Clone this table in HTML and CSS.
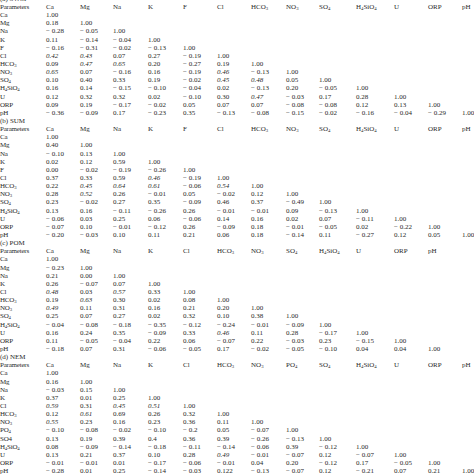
FILE: index.html
```html
<!DOCTYPE html>
<html>
<head>
<meta charset="utf-8">
<link rel="stylesheet" href="styles.css">
</head>
<body>
<table class="corr">
<tbody>
<tr class="title"><td colspan="14">(a) SWM</td></tr>
<tr><th>Parameters</th><th>Ca</th><th>Mg</th><th>Na</th><th>K</th><th>F</th><th>Cl</th><th>HCO<sub>3</sub></th><th>NO<sub>3</sub></th><th>SO<sub>4</sub></th><th>H<sub>4</sub>SiO<sub>4</sub></th><th>U</th><th>ORP</th><th>pH</th></tr>
<tr><th>Ca</th><td>1.00</td></tr>
<tr><th>Mg</th><td>0.18</td><td>1.00</td></tr>
<tr><th>Na</th><td>− 0.28</td><td>− 0.05</td><td>1.00</td></tr>
<tr><th>K</th><td>0.11</td><td>− 0.14</td><td>− 0.04</td><td>1.00</td></tr>
<tr><th>F</th><td>− 0.16</td><td>− 0.31</td><td>− 0.02</td><td>− 0.13</td><td>1.00</td></tr>
<tr><th>Cl</th><td class="sig">0.42</td><td class="sig">0.43</td><td>0.07</td><td>0.27</td><td>− 0.19</td><td>1.00</td></tr>
<tr><th>HCO<sub>3</sub></th><td>0.09</td><td class="sig">0.47</td><td class="sig">0.65</td><td>0.20</td><td>− 0.27</td><td>0.19</td><td>1.00</td></tr>
<tr><th>NO<sub>3</sub></th><td class="sig">0.65</td><td>0.07</td><td>− 0.16</td><td>0.16</td><td>− 0.19</td><td class="sig">0.46</td><td>− 0.13</td><td>1.00</td></tr>
<tr><th>SO<sub>4</sub></th><td>0.10</td><td>0.40</td><td>0.33</td><td>0.19</td><td>− 0.02</td><td class="sig">0.45</td><td class="sig">0.48</td><td>0.05</td><td>1.00</td></tr>
<tr><th>H<sub>4</sub>SiO<sub>4</sub></th><td>0.16</td><td>0.14</td><td>− 0.15</td><td>− 0.10</td><td>− 0.04</td><td>0.02</td><td>− 0.13</td><td>0.20</td><td>− 0.05</td><td>1.00</td></tr>
<tr><th>U</th><td>0.12</td><td>0.32</td><td>0.32</td><td>0.02</td><td>− 0.10</td><td>0.30</td><td class="sig">0.47</td><td>− 0.03</td><td>0.17</td><td>0.28</td><td>1.00</td></tr>
<tr><th>ORP</th><td>0.09</td><td>0.19</td><td>− 0.17</td><td>− 0.02</td><td>0.05</td><td>0.07</td><td>0.07</td><td>− 0.08</td><td>− 0.08</td><td>0.12</td><td>0.13</td><td>1.00</td></tr>
<tr><th>pH</th><td>− 0.36</td><td>− 0.09</td><td>0.17</td><td>− 0.23</td><td>0.35</td><td>− 0.13</td><td>− 0.08</td><td>− 0.15</td><td>− 0.02</td><td>− 0.16</td><td>− 0.04</td><td>− 0.29</td><td>1.00</td></tr>

<tr class="title"><td colspan="14">(b) SUM</td></tr>
<tr><th>Parameters</th><th>Ca</th><th>Mg</th><th>Na</th><th>K</th><th>F</th><th>Cl</th><th>HCO<sub>3</sub></th><th>NO<sub>3</sub></th><th>SO<sub>4</sub></th><th>H<sub>4</sub>SiO<sub>4</sub></th><th>U</th><th>ORP</th><th>pH</th></tr>
<tr><th>Ca</th><td>1.00</td></tr>
<tr><th>Mg</th><td>0.40</td><td>1.00</td></tr>
<tr><th>Na</th><td>− 0.10</td><td>0.13</td><td>1.00</td></tr>
<tr><th>K</th><td>0.02</td><td>0.12</td><td>0.59</td><td>1.00</td></tr>
<tr><th>F</th><td>0.00</td><td>− 0.02</td><td>− 0.19</td><td>− 0.26</td><td>1.00</td></tr>
<tr><th>Cl</th><td>0.37</td><td>0.33</td><td>0.59</td><td class="sig">0.46</td><td>− 0.19</td><td>1.00</td></tr>
<tr><th>HCO<sub>3</sub></th><td>0.22</td><td class="sig">0.45</td><td class="sig">0.64</td><td class="sig">0.61</td><td>− 0.06</td><td class="sig">0.54</td><td>1.00</td></tr>
<tr><th>NO<sub>3</sub></th><td>0.28</td><td class="sig">0.52</td><td>0.26</td><td>− 0.01</td><td>0.05</td><td>− 0.02</td><td>0.12</td><td>1.00</td></tr>
<tr><th>SO<sub>4</sub></th><td>0.23</td><td>− 0.02</td><td>0.27</td><td>0.35</td><td>− 0.09</td><td>0.46</td><td>0.37</td><td>− 0.49</td><td>1.00</td></tr>
<tr><th>H<sub>4</sub>SiO<sub>4</sub></th><td>0.13</td><td>0.16</td><td>− 0.11</td><td>− 0.26</td><td>0.26</td><td>− 0.01</td><td>− 0.01</td><td>0.09</td><td>− 0.13</td><td>1.00</td></tr>
<tr><th>U</th><td>− 0.06</td><td>0.03</td><td>0.25</td><td>0.06</td><td>− 0.06</td><td>0.14</td><td>0.16</td><td>0.02</td><td>0.07</td><td>− 0.11</td><td>1.00</td></tr>
<tr><th>ORP</th><td>− 0.07</td><td>0.10</td><td>− 0.01</td><td>− 0.12</td><td>0.26</td><td>− 0.09</td><td>0.18</td><td>− 0.01</td><td>− 0.05</td><td>0.02</td><td>− 0.22</td><td>1.00</td></tr>
<tr><th>pH</th><td>− 0.20</td><td>− 0.03</td><td>0.10</td><td>0.11</td><td>0.21</td><td>0.06</td><td>0.18</td><td>− 0.14</td><td>0.11</td><td>− 0.27</td><td>0.12</td><td>0.05</td><td>1.00</td></tr>

<tr class="title"><td colspan="14">(c) POM</td></tr>
<tr><th>Parameters</th><th>Ca</th><th>Mg</th><th>Na</th><th>K</th><th>Cl</th><th>HCO<sub>3</sub></th><th>NO<sub>3</sub></th><th>SO<sub>4</sub></th><th>H<sub>4</sub>SiO<sub>4</sub></th><th>U</th><th>ORP</th><th>pH</th></tr>
<tr><th>Ca</th><td>1.00</td></tr>
<tr><th>Mg</th><td>− 0.23</td><td>1.00</td></tr>
<tr><th>Na</th><td>0.21</td><td>0.00</td><td>1.00</td></tr>
<tr><th>K</th><td>0.26</td><td>− 0.07</td><td>0.07</td><td>1.00</td></tr>
<tr><th>Cl</th><td class="sig">0.48</td><td>0.03</td><td class="sig">0.57</td><td>0.33</td><td>1.00</td></tr>
<tr><th>HCO<sub>3</sub></th><td>0.19</td><td class="sig">0.63</td><td>0.30</td><td>0.02</td><td>0.08</td><td>1.00</td></tr>
<tr><th>NO<sub>3</sub></th><td class="sig">0.49</td><td>0.11</td><td>0.31</td><td>0.16</td><td>0.21</td><td>0.20</td><td>1.00</td></tr>
<tr><th>SO<sub>4</sub></th><td>0.25</td><td>0.07</td><td>0.27</td><td>0.02</td><td>0.32</td><td>0.10</td><td>0.38</td><td>1.00</td></tr>
<tr><th>H<sub>4</sub>SiO<sub>4</sub></th><td>− 0.04</td><td>− 0.08</td><td>− 0.18</td><td>− 0.35</td><td>− 0.12</td><td>− 0.24</td><td>− 0.01</td><td>− 0.09</td><td>1.00</td></tr>
<tr><th>U</th><td>0.16</td><td>0.24</td><td>0.35</td><td>− 0.09</td><td>0.33</td><td class="sig">0.46</td><td>0.11</td><td>0.28</td><td>− 0.17</td><td>1.00</td></tr>
<tr><th>ORP</th><td>0.11</td><td>− 0.05</td><td>− 0.04</td><td>0.22</td><td>0.06</td><td>− 0.07</td><td>0.22</td><td>− 0.03</td><td>0.23</td><td>− 0.15</td><td>1.00</td></tr>
<tr><th>pH</th><td>− 0.18</td><td>0.07</td><td>0.31</td><td>− 0.06</td><td>− 0.05</td><td>0.17</td><td>− 0.02</td><td>− 0.05</td><td>− 0.10</td><td>0.04</td><td>0.04</td><td>1.00</td></tr>

<tr class="title"><td colspan="14">(d) NEM</td></tr>
<tr><th>Parameters</th><th>Ca</th><th>Mg</th><th>Na</th><th>K</th><th>Cl</th><th>HCO<sub>3</sub></th><th>NO<sub>3</sub></th><th>PO<sub>4</sub></th><th>SO<sub>4</sub></th><th>H<sub>4</sub>SiO<sub>4</sub></th><th>U</th><th>ORP</th><th>pH</th></tr>
<tr><th>Ca</th><td>1.00</td></tr>
<tr><th>Mg</th><td>0.16</td><td>1.00</td></tr>
<tr><th>Na</th><td>− 0.03</td><td>0.15</td><td>1.00</td></tr>
<tr><th>K</th><td>0.37</td><td>0.01</td><td>0.25</td><td>1.00</td></tr>
<tr><th>Cl</th><td class="sig">0.59</td><td>0.31</td><td class="sig">0.45</td><td class="sig">0.51</td><td>1.00</td></tr>
<tr><th>HCO<sub>3</sub></th><td>0.12</td><td class="sig">0.61</td><td>0.69</td><td>0.26</td><td>0.32</td><td>1.00</td></tr>
<tr><th>NO<sub>3</sub></th><td class="sig">0.55</td><td>0.23</td><td>0.16</td><td>0.23</td><td>0.36</td><td>0.11</td><td>1.00</td></tr>
<tr><th>PO<sub>4</sub></th><td>− 0.10</td><td>− 0.08</td><td>− 0.02</td><td>− 0.10</td><td>− 0.2</td><td>0.05</td><td>− 0.07</td><td>1.00</td></tr>
<tr><th>SO4</th><td>0.13</td><td>0.19</td><td>0.39</td><td>0.4</td><td>0.36</td><td>0.39</td><td>− 0.26</td><td>− 0.13</td><td>1.00</td></tr>
<tr><th>H<sub>4</sub>SiO<sub>4</sub></th><td>0.08</td><td>− 0.09</td><td>− 0.14</td><td>− 0.18</td><td>− 0.11</td><td>− 0.14</td><td>− 0.06</td><td>0.39</td><td>− 0.12</td><td>1.00</td></tr>
<tr><th>U</th><td>0.13</td><td>0.21</td><td>0.37</td><td>0.10</td><td>0.28</td><td class="sig">0.49</td><td>− 0.01</td><td>− 0.07</td><td>0.12</td><td>− 0.07</td><td>1.00</td></tr>
<tr><th>ORP</th><td>− 0.01</td><td>− 0.01</td><td>0.01</td><td>− 0.17</td><td>− 0.06</td><td>− 0.01</td><td>0.04</td><td>0.20</td><td>− 0.12</td><td>0.17</td><td>− 0.05</td><td>1.00</td></tr>
<tr><th>pH</th><td>− 0.28</td><td>0.01</td><td>0.25</td><td>− 0.14</td><td>− 0.03</td><td>0.122</td><td>− 0.13</td><td>− 0.07</td><td>0.12</td><td>− 0.21</td><td>0.07</td><td>0.21</td><td>1.00</td></tr>
</tbody>
</table>
</body>
</html>
```
FILE: styles.css
```css
html, body {
  margin: 0;
  padding: 0;
  background: #ffffff;
  overflow: hidden;
}

.corr {
  display: block;
  border-collapse: collapse;
  width: 494px;
  margin-top: -5.1px;
  font-family: "Liberation Serif", "Times New Roman", serif;
  font-size: 7px;
  color: #2a2a2a;
}

.corr tbody {
  display: block;
}

.corr tr {
  display: grid;
  grid-template-columns: 46px 34px 33px 35px 35px 34px 34px 35px 33px 37px 38px 34px 34px 32px;
  height: 8.15px;
}

.corr th,
.corr td {
  display: block;
  padding: 0;
  line-height: 8.15px;
  height: 8.15px;
  text-align: left;
  font-weight: normal;
  white-space: nowrap;
}

.corr th:first-child {
  letter-spacing: -0.03em;
}

.corr tr.title td {
  grid-column: 1 / -1;
}

.corr .sig {
  font-style: italic;
}

.corr sub {
  font-size: 0.68em;
  line-height: 0;
  vertical-align: -0.3em;
}
```
